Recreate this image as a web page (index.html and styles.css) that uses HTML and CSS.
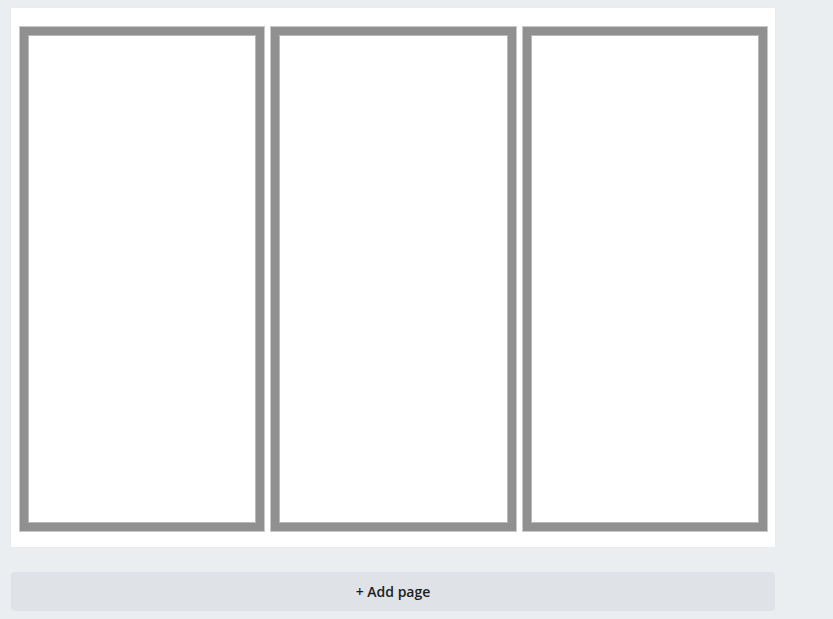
FILE: index.html
```html
<!DOCTYPE html>
<html lang="en">
<head>
<meta charset="utf-8">
<title>Pages</title>
<link rel="stylesheet" href="styles.css">
</head>
<body>
  <main class="editor">
    <section class="page">
      <div class="panel"></div>
      <div class="panel"></div>
      <div class="panel"></div>
    </section>
    <button class="add-page" type="button">+ Add page</button>
  </main>
</body>
</html>
```

FILE: styles.css
```css
html, body {
  margin: 0;
  padding: 0;
  background: #ebeef1;
  font-family: "Open Sans", "Noto Sans", "Liberation Sans", sans-serif;
}

.editor {
  width: 764px;
  margin-left: 11px;
  padding-top: 8px;
  display: flex;
  flex-direction: column;
  gap: 25px;
}

.page {
  background: #ffffff;
  height: 539px;
  box-sizing: border-box;
  padding: 18px 7px 15px 8px;
  display: grid;
  grid-template-columns: repeat(3, 1fr);
  column-gap: 5px;
  box-shadow: 0 0 1px rgba(0, 0, 0, 0.06);
}

.panel {
  border: 9px solid #909090;
  outline: 1px solid #c9c9c9;
  outline-offset: -1px;
  box-shadow: inset 0 0 0 1px #b8b8b8;
  background: #ffffff;
}

.add-page {
  height: 39px;
  border: none;
  border-radius: 4px;
  background: #dfe3e7;
  color: #1b1d20;
  font-family: "Open Sans", "Noto Sans", "Liberation Sans", sans-serif;
  font-size: 14px;
  font-weight: 600;
  padding: 0;
  cursor: pointer;
}
```
